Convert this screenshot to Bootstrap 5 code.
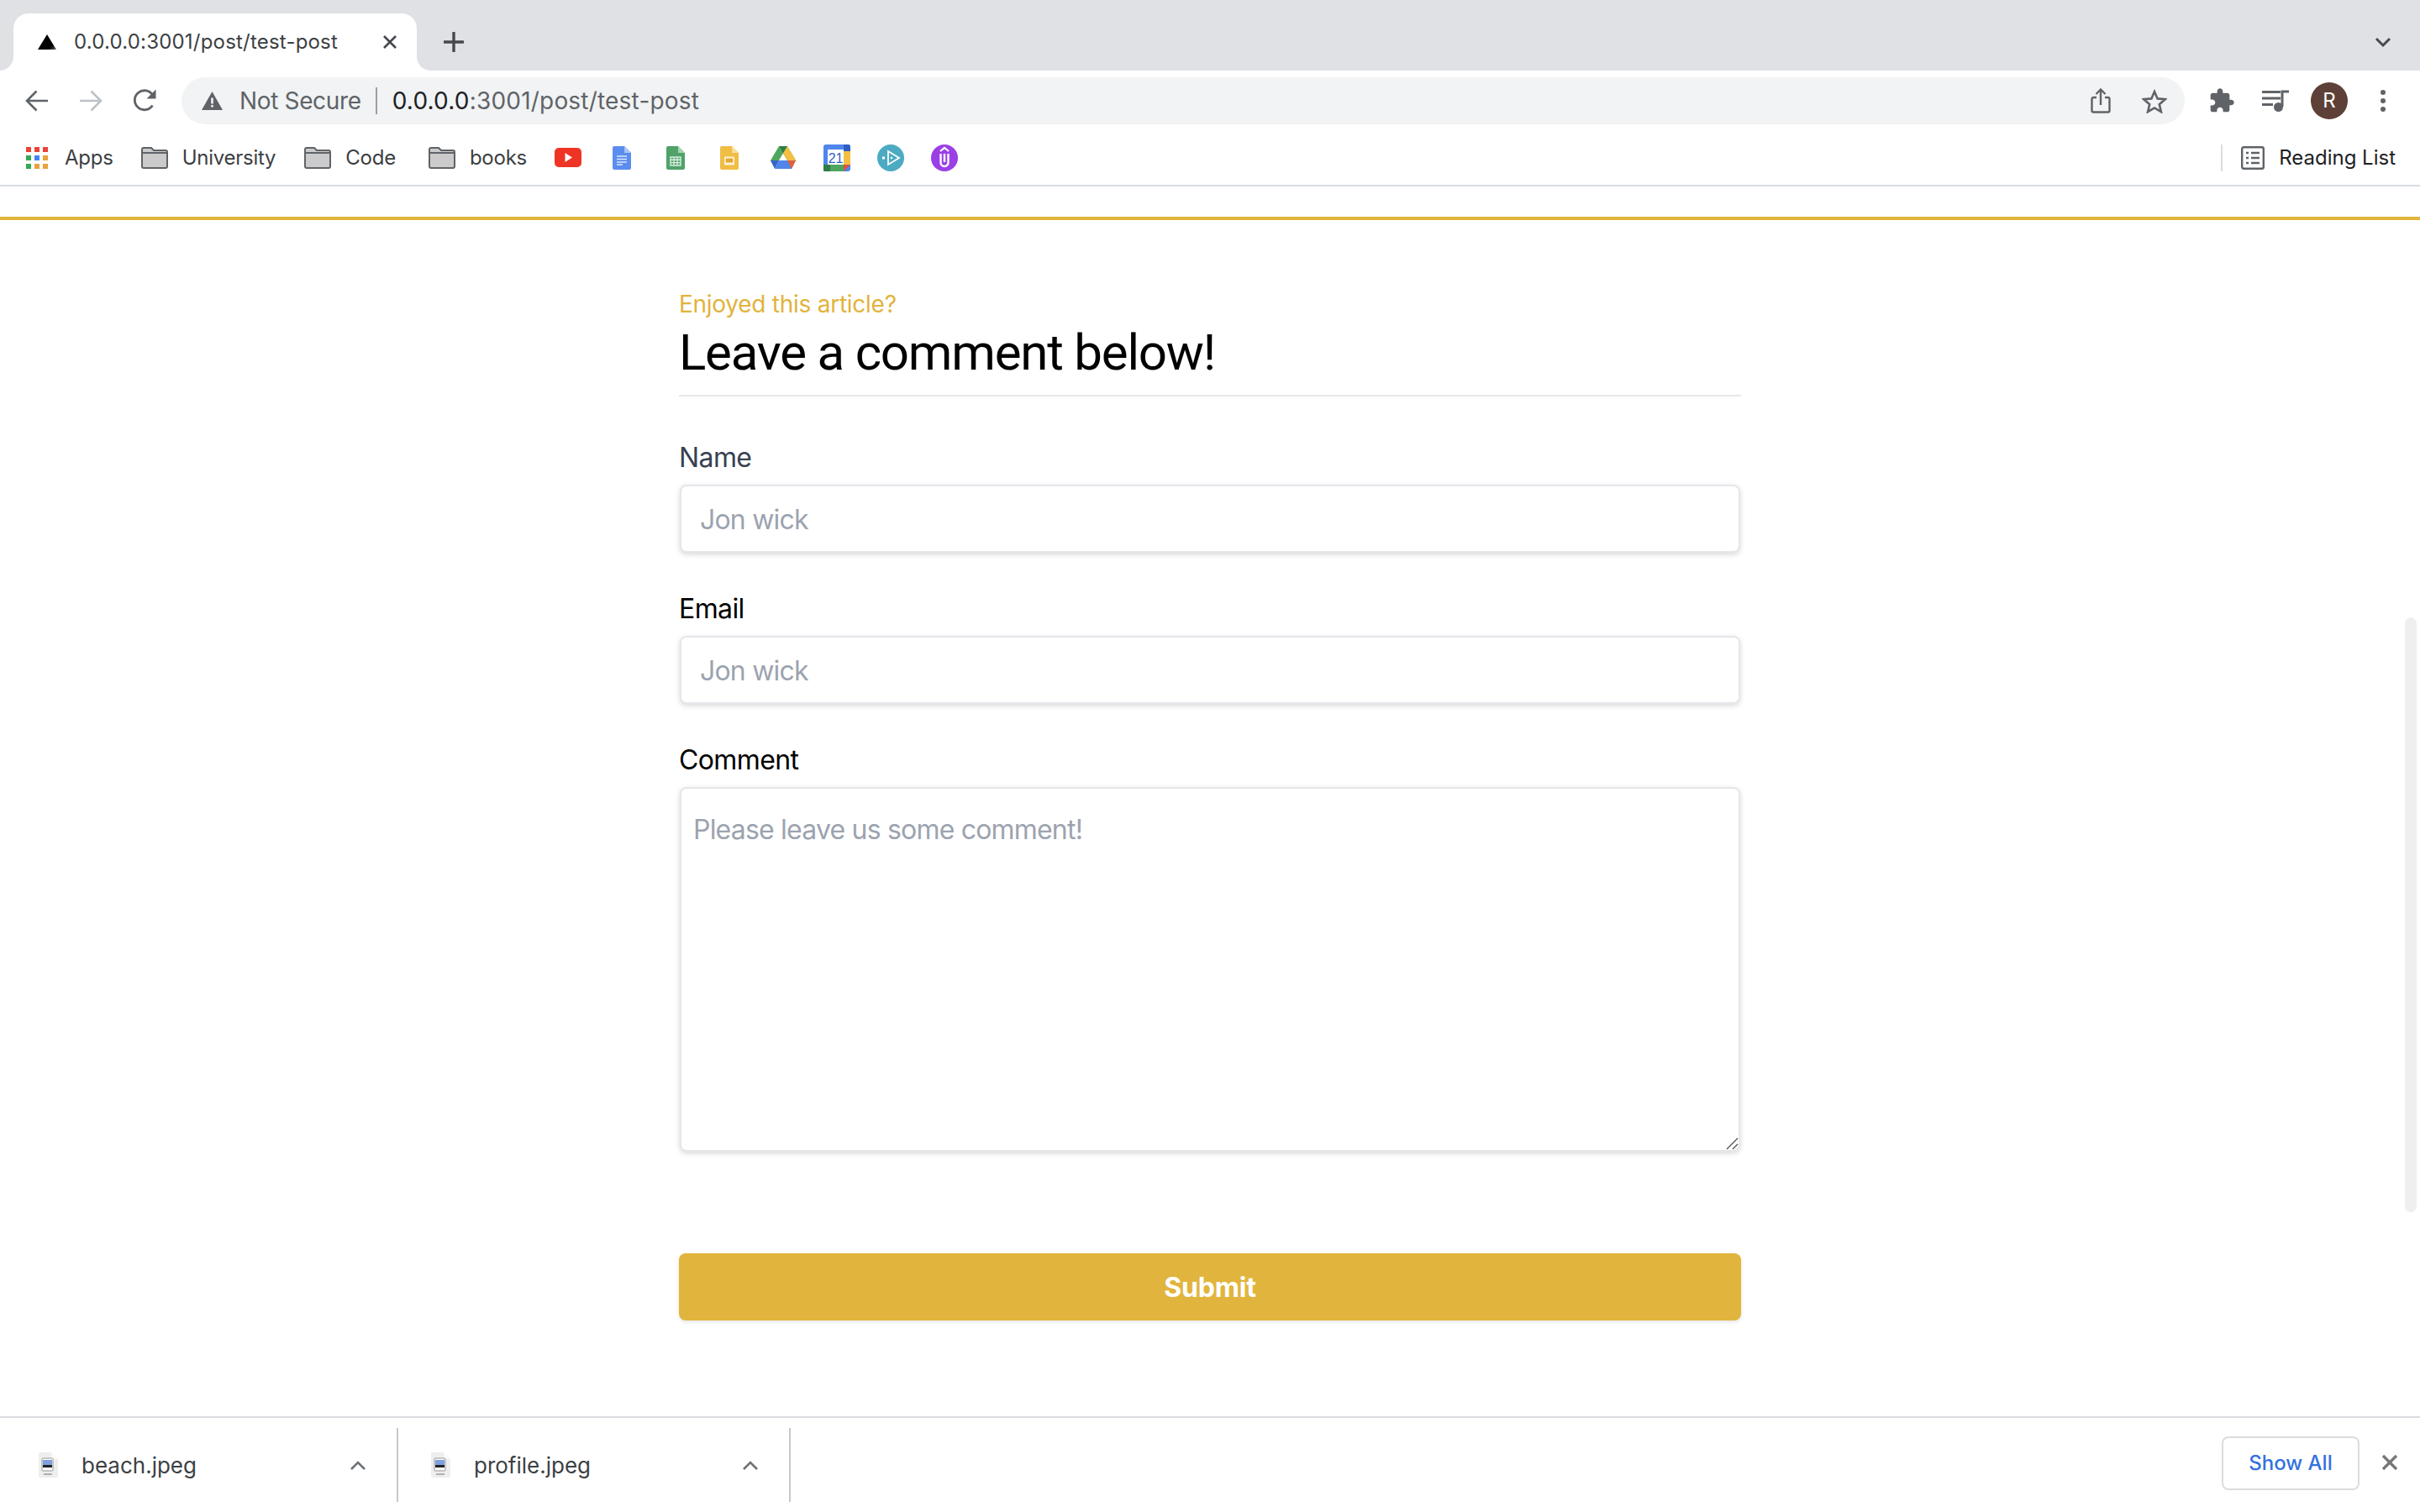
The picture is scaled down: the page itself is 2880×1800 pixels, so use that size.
<!DOCTYPE html>
<html lang="en">
<head>
<meta charset="utf-8">
<title>0.0.0.0:3001/post/test-post</title>
<link href="https://cdn.jsdelivr.net/npm/bootstrap@5.3.0/dist/css/bootstrap.min.css" rel="stylesheet">
<style>
html,body{height:100%;margin:0;overflow:hidden;background:#fff}
body{font-family:"Inter","Liberation Sans",sans-serif;color:#000}
.shell{width:2880px;height:1800px}
.tabstrip{height:84px;background:#dfe1e5;padding-left:16px;flex:none}
.tabitem{position:relative;width:480px;height:68px;margin-top:16px;background:#fff;border-radius:18px 18px 0 0;padding-left:29px;font-size:24px;color:#3c4043;letter-spacing:.2px}
.tabitem::before,.tabitem::after{content:"";position:absolute;bottom:0;width:16px;height:16px;background:radial-gradient(circle at var(--cx) 0,#dfe1e5 15.5px,#fff 16px)}
.tabitem::before{left:-16px;--cx:0}
.tabitem::after{right:-16px;--cx:16px}
.tabfav{width:22px;height:18px;margin-right:21px;flex:none}
.tabclose{margin-left:auto;margin-right:22px;width:20px;height:20px}
.tabplus{margin:38px 0 0 32px;width:24px;height:24px}
.tabchevron{margin:43px 34px 0 auto;width:20px;height:14px}
.toolbar{height:64px;padding:0 12px;flex:none;background:#fff}
.cell{width:64px;height:56px;flex:none;margin-top:8px}
.reloadicon{margin-left:2px}
.omni{height:56px;margin:8px 12px 0 12px;background:#f1f3f4;border-radius:28px;padding-left:24px;font-size:28px;color:#5f6368}
.omniwarn{flex:none}
.omninote{letter-spacing:-.35px}
.omnisep{width:2px;height:32px;background:#9aa0a6;margin:0 18px 0 17px}
.omniurl{letter-spacing:.2px}
.omnihost{color:#202124}
.omnicell{width:64px;height:56px;flex:none;margin-left:0}
.omnicell.endcell{margin-right:4px}
.avatar{width:44px;height:44px;border-radius:50%;background:#5d4037;color:#fff;font-size:24px;line-height:44px;text-align:center}
.bookmarks{height:74px;padding:7px 29px 0 31px;border-bottom:2px solid #dadce0;flex:none;font-size:24px;color:#3c4043;background:#fff;letter-spacing:-.25px}
.bmitem{flex:none;gap:17px}
.bmapps{gap:20px}
.bmgap1{margin-left:33px}
.bmgap2{margin-left:34px}
.bmgap3{margin-left:39px}
.bmicons{margin-left:17px}
.favcell{width:64px;flex:none;text-align:center;line-height:0}
.readwrap{margin-left:auto;gap:17px;color:#202124;font-size:24px;letter-spacing:0}
.readsep{width:2px;height:32px;background:#dadce0;margin-right:5px}
.pagearea{position:relative;flex:1 1 0;min-height:0;overflow:hidden;background:#fff}
.goldtop{height:40px;border-bottom:4px solid #e1b43b}
.formwrap{width:1264px;margin:0 auto;padding-top:80px}
.eyebrow{font-size:28px;line-height:40px;color:#e2b33c;margin:0;letter-spacing:-.26px}
.headline{font-family:"Roboto","Liberation Sans",sans-serif;font-size:60px;line-height:72px;font-weight:400;color:#000;margin:0;padding:2px 0 14px;border-bottom:2px solid #e5e7eb;letter-spacing:-1.2px}
.fieldblock{margin-bottom:43px}
.fieldfirst{margin-top:49px}
.fieldlabel{display:block;font-size:32px;line-height:48px;margin:0 0 8px;color:#000;letter-spacing:-.6px}
.labelslate{color:#374151}
.entry.form-control{height:81px;border:2px solid #e5e7eb;border-radius:8px;box-shadow:0 2px 6px rgba(0,0,0,.16);font-size:32px;padding:2px 22px 0;color:#374151;background:#fff;margin:0 1px;width:1262px;letter-spacing:-.8px}
.entry.form-control::placeholder{color:#9ca3af;opacity:1}
.areawrap{position:relative;height:434px}
textarea.entry.form-control{height:434px;padding:25px 14px 10px;line-height:48px;resize:none}
.gripmark{position:absolute;right:3px;bottom:2px;width:16px;height:16px}
.sendbtn.btn{display:block;width:100%;height:80px;margin-top:121px;background:#e1b53d;border:0;border-radius:8px;color:#fff;font-size:32px;font-weight:700;box-shadow:0 2px 5px rgba(0,0,0,.1);letter-spacing:-.2px;padding-top:8px}
.scrollthumb{position:absolute;left:2862px;top:513px;width:14px;height:708px;border-radius:7px;background:#efefef}
.dlbar{height:114px;border-top:2px solid #dadce0;padding:12px 0 12px 7px;flex:none;background:#fff;font-size:26px;color:#3c4043}
.dlitem{width:467px;height:88px;border-right:2px solid #c8c8c8;flex:none;padding-left:38px;position:relative}
.dlfile{width:24px;height:30px;margin-right:28px;flex:none}
.dlchev{position:absolute;left:409px;top:38px;width:20px;height:12px}
.showall.btn{margin:10px 0 auto auto;width:164px;height:64px;border:2px solid #dadce0;border-radius:8px;background:#fff;color:#3271e0;font-size:24px;font-weight:500;padding:0}
.dlclose{width:20px;height:20px;margin:31px 26px 0 26px}
</style>
</head>
<body>
<div class="shell d-flex flex-column">

  <div class="tabstrip d-flex align-items-start">
    <div class="tabitem d-flex align-items-center">
      <svg class="tabfav" viewBox="0 0 22 18"><defs><linearGradient id="tg" x1="0" y1="0" x2="1" y2="1"><stop offset="0" stop-color="#000"/><stop offset=".75" stop-color="#000"/><stop offset="1" stop-color="#666"/></linearGradient></defs><path d="M11 0L22 18H0z" fill="url(#tg)"/></svg>
      <span>0.0.0.0:3001/post/test-post</span>
      <svg class="tabclose" viewBox="0 0 20 20"><path d="M3 3L17 17M17 3L3 17" stroke="#45484d" stroke-width="2.6" fill="none"/></svg>
    </div>
    <svg class="tabplus" viewBox="0 0 24 24"><path d="M12 1V23M1 12H23" stroke="#45484d" stroke-width="3.4" stroke-linecap="round" fill="none"/></svg>
    <svg class="tabchevron" viewBox="0 0 20 14"><path d="M2 3L10 11L18 3" stroke="#45484d" stroke-width="3" fill="none"/></svg>
  </div>

  <div class="toolbar d-flex">
    <div class="cell d-flex align-items-center justify-content-center"><svg width="28" height="26" viewBox="0 0 28 26"><path d="M27 13H3M13.500 1.500L2 13L13.500 24.500" stroke="#5f6368" stroke-width="2.600" fill="none"/></svg></div>
    <div class="cell d-flex align-items-center justify-content-center"><svg width="28" height="26" viewBox="0 0 28 26"><path d="M1 13H25M14.500 1.500L26 13L14.500 24.500" stroke="#bdc1c6" stroke-width="2.600" fill="none"/></svg></div>
    <div class="cell d-flex align-items-center justify-content-center"><svg class="reloadicon" width="30" height="28" viewBox="0 0 30 28"><path d="M23.500 19.500A11.500 11.500 0 1 1 23.800 7.500" stroke="#5f6368" stroke-width="2.800" fill="none"/><path d="M27.500 0.500V11.500H16.500z" fill="#5f6368"/></svg></div>
    <div class="omni flex-grow-1 d-flex align-items-center">
      <svg class="omniwarn me-3" width="25" height="22" viewBox="0 0 25 22"><path d="M12.500 0L25 22H0z" fill="#5f6368"/><rect x="11.200" y="7.500" width="2.600" height="7" fill="#f1f3f4"/><rect x="11.200" y="16" width="2.600" height="2.600" fill="#f1f3f4"/></svg>
      <span class="omninote ms-1">Not Secure</span><span class="omnisep"></span><span class="omniurl"><span class="omnihost">0.0.0.0</span>:3001/post/test-post</span>
      <div class="omnicell ms-auto d-flex align-items-center justify-content-center"><svg width="24" height="30" viewBox="0 0 24 30"><path d="M7 11H3.500Q1.500 11 1.500 13V26.500Q1.500 28.500 3.500 28.500H20.500Q22.500 28.500 22.500 26.500V13Q22.500 11 20.500 11H17M12 20V2M6.500 7L12 1.500L17.500 7" stroke="#5f6368" stroke-width="2.400" fill="none"/></svg></div>
      <div class="omnicell endcell d-flex align-items-center justify-content-center"><svg width="30" height="29" viewBox="0 0 30 29"><path d="M15 3L18.600 11.400L27.700 12.200L20.800 18.200L22.900 27.100L15 22.400L7.100 27.100L9.200 18.200L2.300 12.200L11.400 11.400z" stroke="#5f6368" stroke-width="2.600" fill="none"/></svg></div>
    </div>
    <div class="cell d-flex align-items-center justify-content-center"><svg width="32" height="32" viewBox="0 0 24 24"><path fill="#5f6368" d="M20.500 11H19V7c0-1.100-.9-2-2-2h-4V3.500C13 2.120 11.880 1 10.500 1S8 2.120 8 3.500V5H4c-1.100 0-1.990.9-1.990 2v3.800H3.500c1.490 0 2.700 1.210 2.700 2.700s-1.210 2.700-2.700 2.700H2V20c0 1.100.9 2 2 2h3.800v-1.500c0-1.490 1.210-2.700 2.700-2.700 1.490 0 2.700 1.210 2.700 2.700V22H17c1.100 0 2-.9 2-2v-4h1.500c1.380 0 2.500-1.120 2.500-2.500S21.880 11 20.500 11z"/></svg></div>
    <div class="cell d-flex align-items-center justify-content-center"><svg width="32" height="26" viewBox="0 0 32 26"><path d="M0 2.500H22M0 10H22M0 17.500H13" stroke="#5f6368" stroke-width="3" fill="none"/><path d="M24 20V2H32" stroke="#5f6368" stroke-width="3" fill="none"/><circle cx="19.500" cy="20.500" r="5.500" fill="#5f6368"/></svg></div>
    <div class="cell d-flex align-items-center justify-content-center"><div class="avatar">R</div></div>
    <div class="cell d-flex align-items-center justify-content-center"><svg width="8" height="28" viewBox="0 0 8 28"><circle cx="4" cy="4" r="3" fill="#5f6368"/><circle cx="4" cy="14" r="3" fill="#5f6368"/><circle cx="4" cy="24" r="3" fill="#5f6368"/></svg></div>
  </div>

  <div class="bookmarks d-flex align-items-center">
    <div class="bmitem bmapps d-flex align-items-center">
      <svg width="26" height="26" viewBox="0 0 26 26"><rect width="6" height="6" fill="#ea4335"/><rect x="10" width="6" height="6" fill="#ea4335"/><rect x="20" width="6" height="6" fill="#ea4335"/><rect y="10" width="6" height="6" fill="#34a853"/><rect x="10" y="10" width="6" height="6" fill="#4285f4"/><rect x="20" y="10" width="6" height="6" fill="#e8a33d"/><rect y="20" width="6" height="6" fill="#34a853"/><rect x="10" y="20" width="6" height="6" fill="#e8a33d"/><rect x="20" y="20" width="6" height="6" fill="#e8a33d"/></svg>
      <span>Apps</span>
    </div>
    <div class="bmitem bmgap1 d-flex align-items-center">
      <svg width="32" height="26" viewBox="0 0 32 26"><path d="M1 3Q1 1 3 1H12L15 4H29Q31 4 31 6V23Q31 25 29 25H3Q1 25 1 23z" fill="#cbcbcb" stroke="#5f6368" stroke-width="2"/><path d="M1 7H31" stroke="#5f6368" stroke-width="2"/></svg>
      <span>University</span>
    </div>
    <div class="bmitem bmgap2 d-flex align-items-center">
      <svg width="32" height="26" viewBox="0 0 32 26"><path d="M1 3Q1 1 3 1H12L15 4H29Q31 4 31 6V23Q31 25 29 25H3Q1 25 1 23z" fill="#cbcbcb" stroke="#5f6368" stroke-width="2"/><path d="M1 7H31" stroke="#5f6368" stroke-width="2"/></svg>
      <span>Code</span>
    </div>
    <div class="bmitem bmgap3 d-flex align-items-center">
      <svg width="32" height="26" viewBox="0 0 32 26"><path d="M1 3Q1 1 3 1H12L15 4H29Q31 4 31 6V23Q31 25 29 25H3Q1 25 1 23z" fill="#cbcbcb" stroke="#5f6368" stroke-width="2"/><path d="M1 7H31" stroke="#5f6368" stroke-width="2"/></svg>
      <span>books</span>
    </div>
    <div class="bmicons d-flex align-items-center">
      <div class="favcell"><svg width="32" height="23" viewBox="0 0 32 23"><rect width="32" height="23" rx="5" fill="#ee3424"/><path d="M12.500 6L21 11.500L12.500 17z" fill="#fff"/></svg></div>
      <div class="favcell"><svg width="22" height="28" viewBox="0 0 22 28"><path d="M2 0H14L22 8V26Q22 28 20 28H2Q0 28 0 26V2Q0 0 2 0z" fill="#5b8def"/><path d="M14 0L22 8H14z" fill="#a9c4f7"/><path d="M5 12H17M5 15.500H17M5 19H17M5 22H12" stroke="#dbe6fb" stroke-width="1.500"/></svg></div>
      <div class="favcell"><svg width="22" height="28" viewBox="0 0 22 28"><path d="M2 0H14L22 8V26Q22 28 20 28H2Q0 28 0 26V2Q0 0 2 0z" fill="#4fa268"/><path d="M14 0L22 8H14z" fill="#a6d3b4"/><path d="M5 13H17V23H5zM5 16.300H17M5 19.600H17M9 13V23M13 13V23" stroke="#d8ecdf" stroke-width="1.400" fill="none"/></svg></div>
      <div class="favcell"><svg width="22" height="28" viewBox="0 0 22 28"><path d="M2 0H14L22 8V26Q22 28 20 28H2Q0 28 0 26V2Q0 0 2 0z" fill="#f0bd45"/><path d="M14 0L22 8H14z" fill="#f8df9f"/><rect x="5" y="12.500" width="12" height="10" rx="1" fill="#fdf3d8"/><rect x="6.800" y="14.500" width="8.400" height="5" fill="#e8a72c"/></svg></div>
      <div class="favcell"><svg width="30" height="27" viewBox="0 0 30 27"><path d="M10 0H20L30 17H20z" fill="#4fa65f"/><path d="M10 0L15 8.500L5 25L0 17z" fill="#4fa65f"/><path d="M10 0H20L15 8.500z" fill="#2f7d44"/><path d="M20 0L30 17H20L15 8.500z" fill="#f3bf42"/><path d="M5 27L10 17H30L25 27z" fill="#4f86ec"/><path d="M0 17L10 17L5 27z" fill="#3567c9"/><path d="M20 17H30L25 27z" fill="#e0603f"/></svg></div>
      <div class="favcell"><svg width="32" height="32" viewBox="0 0 32 32"><rect width="32" height="32" rx="3" fill="#4f86ec"/><path d="M24 0H29Q32 0 32 3V8H24z" fill="#2f5fc4"/><rect x="24" y="8" width="8" height="16" fill="#f3bf42"/><rect y="24" width="24" height="8" fill="#4fa65f"/><path d="M0 24H8V32H3Q0 32 0 29z" fill="#2f7d44"/><path d="M24 24H32L24 32z" fill="#e0503f"/><rect x="5" y="6" width="19" height="18" fill="#fff"/><text x="14.500" y="21.500" text-anchor="middle" font-family="Liberation Sans,sans-serif" font-size="16" fill="#2f5fc4">21</text></svg></div>
      <div class="favcell"><svg width="32" height="32" viewBox="0 0 32 32"><circle cx="16" cy="16" r="16" fill="#4cabc2"/><path d="M13 8L26 16L13 24z" fill="none" stroke="#fff" stroke-width="1.800"/><rect x="6" y="14.500" width="3" height="3" fill="#fff"/><circle cx="17" cy="16" r="1.300" fill="#fff"/></svg></div>
      <div class="favcell"><svg width="32" height="32" viewBox="0 0 32 32"><circle cx="16" cy="16" r="16" fill="#9b3fe6"/><path d="M11 8L16 4L21 8" stroke="#fff" stroke-width="2.200" fill="none"/><path d="M11.500 11V21.500A4.500 4.500 0 0 0 20.500 21.500V11M16 11V21" stroke="#fff" stroke-width="2.400" fill="none"/></svg></div>
    </div>
    <div class="readwrap d-flex align-items-center">
      <span class="readsep"></span>
      <svg width="28" height="28" viewBox="0 0 28 28"><rect x="1.200" y="1.200" width="25.600" height="25.600" rx="2" fill="none" stroke="#5f6368" stroke-width="2.400"/><path d="M6 8H9M12 8H22M6 14H9M12 14H22M6 20H9M12 20H22" stroke="#5f6368" stroke-width="2.400"/></svg>
      <span>Reading List</span>
    </div>
  </div>

  <div class="pagearea">
    <div class="goldtop"></div>
    <form class="formwrap">
      <p class="eyebrow">Enjoyed this article?</p>
      <h3 class="headline">Leave a comment below!</h3>
      <div class="fieldblock fieldfirst">
        <label class="fieldlabel labelslate" for="fname">Name</label>
        <input id="fname" class="entry form-control" type="text" placeholder="Jon wick">
      </div>
      <div class="fieldblock">
        <label class="fieldlabel" for="femail">Email</label>
        <input id="femail" class="entry form-control" type="text" placeholder="Jon wick">
      </div>
      <div>
        <label class="fieldlabel" for="fcomment">Comment</label>
        <div class="areawrap">
          <textarea id="fcomment" class="entry form-control" placeholder="Please leave us some comment!"></textarea>
          <svg class="gripmark" viewBox="0 0 16 16"><path d="M2 15L15 2M9 15L15 9" stroke="#555" stroke-width="1.400" fill="none"/></svg>
        </div>
      </div>
      <button type="button" class="sendbtn btn">Submit</button>
    </form>
    <div class="scrollthumb"></div>
  </div>

  <div class="dlbar d-flex">
    <div class="dlitem d-flex align-items-center">
      <svg class="dlfile" viewBox="0 0 24 30"><path d="M1 2Q1 0 3 0H16L24 8V28Q24 30 22 30H3Q1 30 1 28z" fill="#eeeeee"/><path d="M16 0L24 8H16z" fill="#fbfbfb"/><rect x="5" y="7" width="13" height="15" rx="1" fill="#fafafa" stroke="#9a9a9a"/><rect x="6" y="9" width="11" height="7" fill="#7f9fe0"/><rect x="6" y="15" width="11" height="3" fill="#222"/><rect x="7" y="25" width="10" height="2" fill="#b0b0b0"/></svg>
      <span>beach.jpeg</span>
      <svg class="dlchev" viewBox="0 0 20 12"><path d="M2 11L10 3L18 11" stroke="#6e7276" stroke-width="2.600" fill="none"/></svg>
    </div>
    <div class="dlitem d-flex align-items-center">
      <svg class="dlfile" viewBox="0 0 24 30"><path d="M1 2Q1 0 3 0H16L24 8V28Q24 30 22 30H3Q1 30 1 28z" fill="#eeeeee"/><path d="M16 0L24 8H16z" fill="#fbfbfb"/><rect x="5" y="7" width="13" height="15" rx="1" fill="#fafafa" stroke="#9a9a9a"/><rect x="6" y="9" width="11" height="7" fill="#7f9fe0"/><rect x="6" y="15" width="11" height="3" fill="#222"/><rect x="7" y="25" width="10" height="2" fill="#b0b0b0"/></svg>
      <span>profile.jpeg</span>
      <svg class="dlchev" viewBox="0 0 20 12"><path d="M2 11L10 3L18 11" stroke="#6e7276" stroke-width="2.600" fill="none"/></svg>
    </div>
    <button type="button" class="showall btn">Show All</button>
    <svg class="dlclose" viewBox="0 0 20 20"><path d="M2 2L18 18M18 2L2 18" stroke="#757575" stroke-width="3.200" fill="none"/></svg>
  </div>

</div>
<script src="https://cdn.jsdelivr.net/npm/bootstrap@5.3.0/dist/js/bootstrap.bundle.min.js"></script>
</body>
</html>
